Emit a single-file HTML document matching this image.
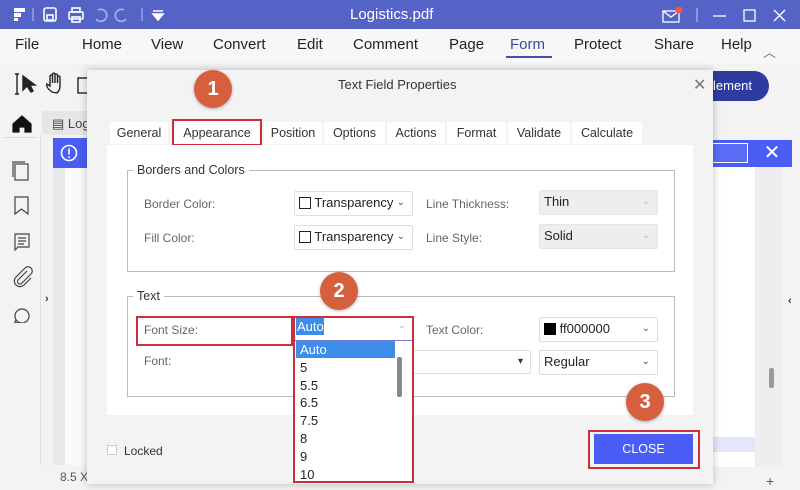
<!DOCTYPE html>
<html><head><style>
*{margin:0;padding:0;box-sizing:border-box}
body{width:800px;height:490px;overflow:hidden;background:#f3f3f3;font-family:"Liberation Sans",sans-serif;position:relative;color:#333}
.a{position:absolute}
.t{font-size:13px;white-space:nowrap}
.lbl{color:#666;font-size:12px}
.circ{position:absolute;width:38px;height:38px;border-radius:50%;background:#d6603d;color:#fff;font-size:20px;font-weight:bold;text-align:center;line-height:38px;box-shadow:0 1px 3px rgba(0,0,0,.3)}
.sel{position:absolute;background:#fff;border:1px solid #ddd;border-radius:2px;font-size:13px;color:#222;padding-left:4px;line-height:22px}
.tab{position:absolute;top:122px;height:22px;background:#fff;font-size:12.5px;text-align:center;line-height:22px;color:#333}
.chev{position:absolute;right:7px;top:0;font-size:10px;color:#555}
</style></head><body>
<div class="a" style="left:0;top:0;width:800px;height:29px;background:#5563c7"></div>
<div class="a t" style="left:350px;top:6px;color:#fff;font-size:15px">Logistics.pdf</div>
<svg class="a" style="left:12px;top:6px" width="170" height="18" fill="none" stroke="#fff" stroke-width="1.6">
<rect x="2" y="2" width="11" height="4" fill="#fff" stroke="none"/><rect x="2" y="7" width="7" height="4" fill="#fff" stroke="none"/><rect x="2" y="12" width="4" height="3" fill="#fff" stroke="none"/>
<line x1="21" y1="2" x2="21" y2="15" stroke-width="1" opacity=".6"/>
<rect x="32" y="2" width="12" height="13" rx="2"/><rect x="35" y="9" width="6" height="5"/>
<rect x="57" y="6" width="14" height="7" rx="1"/><rect x="60" y="2" width="8" height="4"/><rect x="60" y="11" width="8" height="5"/>
<path d="M86 4 a6 6 0 1 1 -2 9" opacity=".5"/><path d="M112 4 a6 6 0 1 0 2 9" opacity=".5"/>
<line x1="130" y1="2" x2="130" y2="15" stroke-width="1" opacity=".6"/>
<path d="M141 5 h10 M141 8 l5 6 l5 -6z" fill="#fff"/>
</svg>
<svg class="a" style="left:660px;top:5px" width="140" height="20" fill="none" stroke="#fff" stroke-width="1.3">
<rect x="3" y="6" width="16" height="11"/><path d="M3 6 l8 6 l8 -6"/><circle cx="19" cy="5" r="3.5" fill="#f0594a" stroke="none"/>
<line x1="37" y1="3" x2="37" y2="17" opacity=".5"/>
<line x1="53" y1="11" x2="66" y2="11"/><rect x="84" y="5" width="11" height="11"/><path d="M114 5 l11 11 M125 5 l-11 11"/>
</svg>
<div class="a" style="left:0;top:29px;width:800px;height:35px;background:#f7f7f7"></div>
<div class="a" style="top:36px;left:0;font-size:15px;color:#222;width:800px">
<span class="a" style="left:15px">File</span><span class="a" style="left:82px">Home</span><span class="a" style="left:151px">View</span><span class="a" style="left:213px">Convert</span><span class="a" style="left:297px">Edit</span><span class="a" style="left:353px">Comment</span><span class="a" style="left:449px">Page</span><span class="a" style="left:510px;color:#3d49a8">Form</span><span class="a" style="left:574px">Protect</span><span class="a" style="left:654px">Share</span><span class="a" style="left:721px">Help</span>
</div>
<div class="a" style="left:506px;top:56px;width:46px;height:2px;background:#4652a8"></div>
<div class="a" style="left:763px;top:42px;font-size:13px;color:#666">︿</div>
<svg class="a" style="left:14px;top:72px" width="80" height="24" fill="none" stroke="#222" stroke-width="1.4">
<path d="M3 2 v20 M1 2 h4 M1 22 h4"/><path d="M9 4 l0 14 l4 -4 l4 6 l2 -1 l-3 -6 l5 0z" fill="#222"/>
<path d="M38 20 c-4 -3 -6 -6 -5 -8 l3 2 v-10 a1.3 1.3 0 0 1 2.5 0 v7 v-9 a1.3 1.3 0 0 1 2.5 0 v9 v-8 a1.3 1.3 0 0 1 2.5 0 v8 v-6 a1.3 1.3 0 0 1 2.5 0 v9 c0 4 -2 6 -3 7z"/>
<rect x="64" y="6" width="10" height="15"/>
</svg>
<div class="a" style="left:690px;top:71px;width:79px;height:30px;border-radius:15px;background:#2f3b9e;color:#fff;font-size:13px;line-height:30px;padding-left:23px">lement</div>
<div class="a" style="left:40px;top:135px;width:1px;height:330px;background:#ddd"></div>
<div class="a" style="left:3px;top:137px;width:35px;height:1px;background:#ddd"></div>
<svg class="a" style="left:10px;top:113px" width="25" height="210" fill="none" stroke="#444" stroke-width="1.2">
<path d="M3 11 l9 -8 l9 8 v8 h-6 v-5 h-6 v5 h-6z" fill="#111" stroke="#111"/>
<rect x="5" y="51" width="13" height="16"/><path d="M3 64 v-15 h12"/>
<path d="M5 84 h13 v17 l-6.5 -5 l-6.5 5z"/>
<path d="M5 121 h14 v13 h-11 l-3 3z M8 125 h8 M8 128 h8 M8 131 h6"/>
<path d="M17 158 l-9 9 a2.5 2.5 0 0 0 4 3 l9 -9 a4 4 0 0 0 -6 -6 l-9 9 a5.5 5.5 0 0 0 8 8 l7 -7"/>
<circle cx="12" cy="203" r="7"/><path d="M6 207 l-2 4 l4 -2"/>
</svg>
<div class="a" style="left:45px;top:293px;font-size:11px;color:#333;font-weight:bold">›</div>
<div class="a" style="left:42px;top:111px;width:50px;height:24px;background:#e6e6e6;border-radius:3px 3px 0 0"></div>
<div class="a t" style="left:52px;top:116px;color:#444">▤ Log</div>
<div class="a" style="left:53px;top:138px;width:40px;height:30px;background:#4b5ef3"></div>
<svg class="a" style="left:60px;top:144px" width="18" height="18" fill="none" stroke="#fff" stroke-width="1.6"><circle cx="9" cy="9" r="7.5"/><path d="M9 4.5 v6 M9 12.5 v1.5"/></svg>
<div class="a" style="left:53px;top:168px;width:12px;height:297px;background:#e8e8e8"></div>
<div class="a" style="left:65px;top:168px;width:25px;height:297px;background:#fafafa"></div>
<div class="a" style="left:700px;top:140px;width:52px;height:27px;background:#4b5ef3"></div>
<div class="a" style="left:705px;top:143px;width:43px;height:20px;border:1px solid #fff;background:#5a6cf5"></div>
<div class="a" style="left:752px;top:140px;width:40px;height:27px;background:#4b5ef3;color:#fff;font-size:20px;text-align:center;line-height:27px">✕</div>
<div class="a" style="left:713px;top:167px;width:42px;height:300px;background:#fff"></div>
<div class="a" style="left:713px;top:437px;width:42px;height:15px;background:#e4e7fb"></div>
<div class="a" style="left:755px;top:167px;width:28px;height:300px;background:#eeeeee"></div>
<div class="a" style="left:769px;top:368px;width:5px;height:20px;background:#999;border-radius:2px"></div>
<div class="a" style="left:788px;top:295px;font-size:11px;font-weight:bold;color:#333">‹</div>
<div class="a" style="left:766px;top:473px;font-size:14px;color:#555">+</div>
<div class="a t" style="left:60px;top:470px;color:#555;font-size:12px">8.5 X</div>
<div class="a" style="left:87px;top:70px;width:626px;height:414px;background:#f3f3f3;box-shadow:0 0 8px rgba(0,0,0,.25)"></div>
<div class="a t" style="left:338px;top:77px;color:#333">Text Field Properties</div>
<div class="a" style="left:693px;top:75px;font-size:16px;color:#777">✕</div>
<div class="tab" style="left:110px;width:58px">General</div>
<div class="tab" style="left:172px;width:90px;top:119px;height:27px;line-height:25px;border:2px solid #cc2e3a">Appearance</div>
<div class="tab" style="left:264px;width:58px">Position</div>
<div class="tab" style="left:324px;width:61px">Options</div>
<div class="tab" style="left:387px;width:58px">Actions</div>
<div class="tab" style="left:447px;width:59px">Format</div>
<div class="tab" style="left:508px;width:62px">Validate</div>
<div class="tab" style="left:572px;width:70px">Calculate</div>
<div class="a" style="left:107px;top:145px;width:586px;height:270px;background:#fff"></div>
<div class="a" style="left:127px;top:170px;width:548px;height:102px;border:1px solid #bbb"></div>
<div class="a t" style="left:133px;top:163px;background:#fff;padding:0 4px;font-size:12.5px;color:#333">Borders and Colors</div>
<div class="a lbl" style="left:144px;top:197px">Border Color:</div>
<div class="a lbl" style="left:144px;top:231px">Fill Color:</div>
<div class="sel" style="left:294px;top:191px;width:119px;height:25px"><span style="display:inline-block;width:12px;height:12px;border:1px solid #222;vertical-align:-2px"></span> Transparency<span class="chev">⌄</span></div>
<div class="sel" style="left:294px;top:225px;width:119px;height:25px"><span style="display:inline-block;width:12px;height:12px;border:1px solid #222;vertical-align:-2px"></span> Transparency<span class="chev">⌄</span></div>
<div class="a lbl" style="left:426px;top:197px">Line Thickness:</div>
<div class="a lbl" style="left:426px;top:231px">Line Style:</div>
<div class="sel" style="left:539px;top:190px;width:119px;height:25px;background:#eee;border-color:#e4e4e4">Thin<span class="chev" style="color:#bbb">⌄</span></div>
<div class="sel" style="left:539px;top:224px;width:119px;height:25px;background:#eee;border-color:#e4e4e4">Solid<span class="chev" style="color:#bbb">⌄</span></div>
<div class="a" style="left:127px;top:296px;width:548px;height:101px;border:1px solid #bbb"></div>
<div class="a t" style="left:133px;top:289px;background:#fff;padding:0 4px;font-size:12.5px">Text</div>
<div class="a" style="left:136px;top:316px;width:157px;height:30px;border:2px solid #cc2e3a"></div>
<div class="a lbl" style="left:144px;top:323px">Font Size:</div>
<div class="a lbl" style="left:144px;top:354px">Font:</div>
<div class="sel" style="left:413px;top:350px;width:118px;height:24px;border-color:#ddd"><span class="chev" style="color:#333">▾</span></div>
<div class="a lbl" style="left:426px;top:323px">Text Color:</div>
<div class="sel" style="left:539px;top:317px;width:119px;height:25px"><span style="display:inline-block;width:12px;height:12px;background:#000;vertical-align:-2px"></span> ff000000<span class="chev">⌄</span></div>
<div class="sel" style="left:539px;top:350px;width:119px;height:25px">Regular<span class="chev">⌄</span></div>
<div class="a" style="left:293px;top:316px;width:121px;height:167px;border:2px solid #cc2e3a;background:#fff"></div>
<div class="a" style="left:295px;top:340px;width:117px;height:1px;background:#7a7ad6"></div>
<div class="a" style="left:296px;top:318px;width:28px;height:17px;background:#3d8ee8;color:#fff;font-size:13px;line-height:17px;padding-left:1px">Auto</div>
<div class="a" style="left:398px;top:320px;font-size:9px;color:#aaa">⌄</div>
<div class="a" style="left:296px;top:341px;width:99px;height:17px;background:#3d8ee8"></div>
<div class="a" style="left:397px;top:357px;width:5px;height:40px;background:#888;border-radius:2px"></div>
<div class="a" style="left:300px;top:341px;font-size:13px;line-height:17.8px;color:#222">
<div style="color:#fff">Auto</div><div>5</div><div>5.5</div><div>6.5</div><div>7.5</div><div>8</div><div>9</div><div>10</div></div>
<div class="a" style="left:107px;top:445px;width:10px;height:10px;border:1px solid #ccc;background:#fff"></div>
<div class="a t" style="left:124px;top:444px;font-size:12px;color:#333">Locked</div>
<div class="a" style="left:588px;top:430px;width:112px;height:39px;border:2px solid #cc2e3a"></div>
<div class="a" style="left:594px;top:434px;width:99px;height:30px;background:#4a5ef5;color:#fff;font-size:12.5px;text-align:center;line-height:30px">CLOSE</div>
<div class="circ" style="left:194px;top:70px">1</div>
<div class="circ" style="left:320px;top:272px">2</div>
<div class="circ" style="left:626px;top:383px">3</div>
</body></html>
